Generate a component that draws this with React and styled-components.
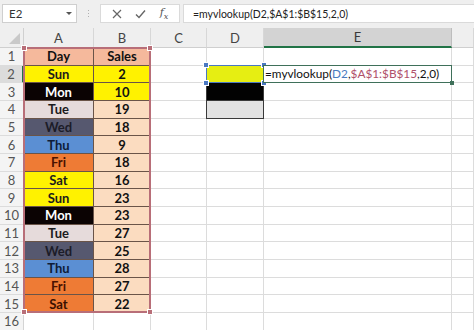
import React from "react";
import styled, { createGlobalStyle } from "styled-components";

const GlobalStyle = createGlobalStyle`
  body {
    margin: 0;
    background: #fff;
    font-family: Lato, "Liberation Sans", sans-serif;
    overflow: hidden;
  }
`;

const Window = styled.div`
  width: 474px;
  height: 330px;
  overflow: hidden;
  display: flex;
  flex-direction: column;
`;

const FormulaBar = styled.div`
  height: 28px;
  flex: none;
  background: #efefef;
  display: flex;
  align-items: flex-start;
  padding: 4px 0 0 2px;
  box-sizing: border-box;
`;

const NameBox = styled.div`
  width: 75px;
  height: 19px;
  box-sizing: border-box;
  background: #fff;
  border: 1px solid #cfcfcf;
  display: flex;
  align-items: center;
  justify-content: space-between;
  padding: 0 4px 0 6px;
  font-size: 11.5px;
  color: #333;
`;

const Arrow = styled.span`
  width: 0;
  height: 0;
  border-left: 3px solid transparent;
  border-right: 3px solid transparent;
  border-top: 3px solid #555;
`;

const Grip = styled.div`
  width: 23px;
  height: 19px;
  display: flex;
  flex-direction: column;
  align-items: center;
  justify-content: center;
  gap: 2px;
  span {
    width: 1px;
    height: 1px;
    background: #b0b0b0;
  }
`;

const FxBox = styled.div`
  width: 80px;
  height: 19px;
  box-sizing: border-box;
  background: #fff;
  border: 1px solid #dadada;
  display: flex;
  align-items: center;
  justify-content: space-around;
  padding: 0 4px;
  color: #666;
`;

const FxLabel = styled.span`
  font-family: "DejaVu Serif", serif;
  font-style: italic;
  font-size: 11px;
  color: #555;
  sub {
    font-size: 8px;
  }
`;

const FormulaInput = styled.div`
  flex: 1;
  margin-left: 3px;
  height: 19px;
  box-sizing: border-box;
  background: #fff;
  border: 1px solid #dadada;
  border-right: none;
  display: flex;
  align-items: center;
  padding-left: 9px;
  font-size: 10.5px;
  color: #222;
`;

const Sheet = styled.div`
  display: grid;
  grid-template-columns: 24px 70px 57px 56px 57px 188px 1fr;
  grid-template-rows: 20px repeat(16, 17.67px);
  flex: none;
`;

const Corner = styled.div`
  grid-row: 1;
  grid-column: 1;
  background: #efefef;
  border-right: 1px solid #d0d0d0;
  border-bottom: 1px solid #cfcfcf;
  position: relative;
  &::after {
    content: "";
    position: absolute;
    right: 3px;
    bottom: 3px;
    border-left: 11px solid transparent;
    border-bottom: 11px solid #c9c9c9;
  }
`;

const ColHead = styled.div`
  grid-row: 1;
  grid-column: ${p => p.$c};
  background: ${p => (p.$on ? "#d3d3d3" : "#efefef")};
  border-right: 1px solid ${p => (p.$on ? "#bdbdbd" : "#d7d7d7")};
  border-bottom: ${p => (p.$on ? "2px solid #217346" : "1px solid #cfcfcf")};
  display: flex;
  align-items: center;
  justify-content: center;
  font-size: 13px;
  color: ${p => (p.$on ? "#3a3a3a" : "#444")};
`;

const RowHead = styled.div`
  grid-row: ${p => p.$r};
  grid-column: 1;
  background: ${p => (p.$on ? "#dcdcdc" : "#f4f4f4")};
  border-right: ${p => (p.$on ? "2px solid #217346" : "1px solid #d4d4d4")};
  border-bottom: 1px solid #dcdcdc;
  display: flex;
  align-items: center;
  justify-content: center;
  font-size: 13px;
  color: #555;
`;

const Cell = styled.div`
  grid-row: ${p => p.$r};
  grid-column: ${p => p.$c};
  background: ${p => p.$bg || "#fff"};
  color: ${p => p.$fg || "#111"};
  border-right: 1px solid ${p => p.$line || "#dcdcdc"};
  border-bottom: 1px solid ${p => p.$line || "#dcdcdc"};
  display: flex;
  align-items: center;
  justify-content: center;
  font-size: 13px;
  font-weight: 700;
`;

const Swatch = styled.div`
  grid-row: ${p => p.$r};
  grid-column: 5;
  background: ${p => p.$bg};
  border: 1px solid #3a3a3a;
  margin: -1px 0 0 -1px;
`;

const Frame = styled.div`
  grid-row: ${p => p.$rows};
  grid-column: ${p => p.$cols};
  border: ${p => p.$w}px solid ${p => p.$color};
  margin: -1px 0 0 -1px;
  position: relative;
  pointer-events: none;
  z-index: 2;
`;

const Handle = styled.span`
  position: absolute;
  width: 4px;
  height: 4px;
  background: ${p => p.$color};
  border: 1px solid #fff;
  ${p => (p.$top ? "top: -4px;" : "bottom: -4px;")}
  ${p => (p.$left ? "left: -4px;" : "right: -4px;")}
`;

const EditCell = styled.div`
  grid-row: 3;
  grid-column: 6;
  background: #fff;
  border: 1.5px solid #3f705a;
  margin: -1px 0 0 -1px;
  position: relative;
  z-index: 3;
  display: flex;
  align-items: center;
  padding-left: 1px;
  font-size: 11.8px;
  color: #111;
  white-space: nowrap;
`;

const Ref = styled.span`
  color: ${p => p.$color};
`;

const EditHandle = styled.span`
  position: absolute;
  right: -3px;
  bottom: -3px;
  width: 4px;
  height: 4px;
  background: #3f705a;
`;

const cols = ["A", "B", "C", "D", "E", "F"];

const YEL = "#fff200";
const PEACH = "#fbdcc0";
const days = {
  Sun: { bg: YEL, fg: "#1c1c1c" },
  Mon: { bg: "#0b0303", fg: "#ffffff" },
  Tue: { bg: "#e6dbdb", fg: "#1c1c1c" },
  Wed: { bg: "#56586f", fg: "#1c1c28" },
  Thu: { bg: "#5b8fd3", fg: "#0e1c38" },
  Fri: { bg: "#ee7b35", fg: "#4a1200" },
  SatY: { bg: YEL, fg: "#1c1c1c" },
  SatO: { bg: "#ee7b35", fg: "#3a1000" }
};

const data = [
  ["Sun", 2, "Sun", YEL],
  ["Mon", 10, "Mon", YEL],
  ["Tue", 19, "Tue"],
  ["Wed", 18, "Wed"],
  ["Thu", 9, "Thu"],
  ["Fri", 18, "Fri"],
  ["Sat", 16, "SatY"],
  ["Sun", 23, "Sun"],
  ["Mon", 23, "Mon"],
  ["Tue", 27, "Tue"],
  ["Wed", 25, "Wed"],
  ["Thu", 28, "Thu"],
  ["Fri", 27, "Fri"],
  ["Sat", 22, "SatO"]
];

const LINE = "#6a5448";
const RANGE = "#b86e78";
const BLUE = "#4a78c2";

const XIcon = () => (
  <svg width="10" height="10" viewBox="0 0 10 10">
    <path d="M1 1 L9 9 M9 1 L1 9" stroke="#666" strokeWidth="1.2" />
  </svg>
);

const CheckIcon = () => (
  <svg width="11" height="10" viewBox="0 0 11 10">
    <path d="M1 5.5 L4 8.5 L10 1.5" stroke="#666" strokeWidth="1.4" fill="none" />
  </svg>
);

const corners = [
  { top: true, left: true },
  { top: true, left: false },
  { top: false, left: true },
  { top: false, left: false }
];

export default function App() {
  const rowNums = Array.from({ length: 16 }, (_, i) => i + 1);
  return (
    <Window>
      <GlobalStyle />
      <FormulaBar>
        <NameBox>
          E2
          <Arrow />
        </NameBox>
        <Grip>
          <span />
          <span />
          <span />
        </Grip>
        <FxBox>
          <XIcon />
          <CheckIcon />
          <FxLabel>
            f<sub>x</sub>
          </FxLabel>
        </FxBox>
        <FormulaInput>=myvlookup(D2,$A$1:$B$15,2,0)</FormulaInput>
      </FormulaBar>

      <Sheet>
        <Corner />
        {cols.map((c, i) => (
          <ColHead key={c} $c={i + 2} $on={c === "E"}>
            {c === "F" ? "" : c}
          </ColHead>
        ))}

        {rowNums.map(n => (
          <RowHead key={n} $r={n + 1} $on={n === 2}>
            {n}
          </RowHead>
        ))}

        {rowNums.map(n =>
          cols.map((c, i) => {
            const r = n + 1;
            const col = i + 2;
            if (n === 1 && c === "A")
              return <Cell key={c + n} $r={r} $c={col} $bg="#f5b99c" $line={LINE}>Day</Cell>;
            if (n === 1 && c === "B")
              return <Cell key={c + n} $r={r} $c={col} $bg="#f5b99c" $line={LINE}>Sales</Cell>;
            if (n >= 2 && n <= 15 && c === "A") {
              const d = data[n - 2];
              const s = days[d[2]];
              return (
                <Cell key={c + n} $r={r} $c={col} $bg={s.bg} $fg={s.fg} $line={LINE}>
                  {d[0]}
                </Cell>
              );
            }
            if (n >= 2 && n <= 15 && c === "B") {
              const d = data[n - 2];
              return (
                <Cell key={c + n} $r={r} $c={col} $bg={d[3] || PEACH} $line={LINE}>
                  {d[1]}
                </Cell>
              );
            }
            if (c === "D" && n >= 2 && n <= 4) return null;
            if (c === "E" && n === 2) return null;
            return <Cell key={c + n} $r={r} $c={col} />;
          })
        )}

        <Swatch $r={3} $bg="#e6ee12" />
        <Swatch $r={4} $bg="#020202" />
        <Swatch $r={5} $bg="#e2e2e2" />

        <Frame $rows="2 / 17" $cols="2 / 4" $w={2} $color={RANGE}>
          {corners.map((k, i) => (
            <Handle key={i} $top={k.top} $left={k.left} $color={RANGE} />
          ))}
        </Frame>

        <Frame $rows="3" $cols="5" $w={1} $color={BLUE}>
          {corners.map((k, i) => (
            <Handle key={i} $top={k.top} $left={k.left} $color={BLUE} />
          ))}
        </Frame>

        <EditCell>
          =myvlookup(<Ref $color="#4a7cbf">D2</Ref>,
          <Ref $color="#b0506a">$A$1:$B$15</Ref>,2,0)
          <EditHandle />
        </EditCell>
      </Sheet>
    </Window>
  );
}
